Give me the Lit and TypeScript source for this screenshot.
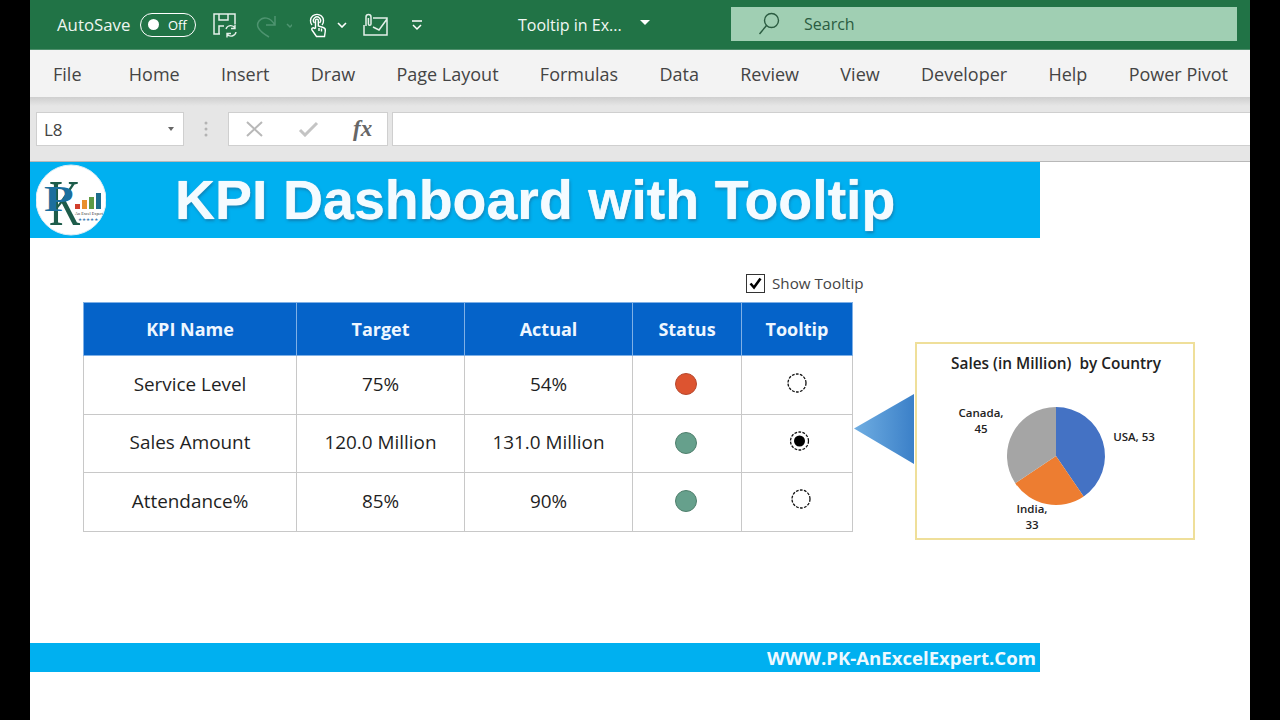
import { LitElement, html, css, svg } from 'lit';
import { customElement } from 'lit/decorators.js';

const TABS = ['File', 'Home', 'Insert', 'Draw', 'Page Layout', 'Formulas', 'Data', 'Review', 'View', 'Developer', 'Help', 'Power Pivot'];

const ROWS = [
  { name: 'Service Level', target: '75%', actual: '54%', status: 'bad', radio: 'r1', on: false },
  { name: 'Sales Amount', target: '120.0 Million', actual: '131.0 Million', status: 'good', radio: 'r2', on: true },
  { name: 'Attendance%', target: '85%', actual: '90%', status: 'good', radio: 'r3', on: false },
];

@customElement('app-root')
export class AppRoot extends LitElement {
  static styles = css`
    :host {
      display: block;
      width: 1280px;
      height: 720px;
      background: #000;
      overflow: hidden;
      font-family: 'Open Sans', 'Noto Sans', sans-serif;
    }
    .window {
      width: 1220px;
      height: 720px;
      margin-left: 30px;
      background: #fff;
      display: flex;
      flex-direction: column;
      overflow: hidden;
    }

    /* title bar */
    .titlebar {
      height: 50px;
      flex: none;
      background: #217346;
      color: #fff;
      display: flex;
      align-items: center;
      padding-left: 27px;
      box-sizing: border-box;
      border-bottom: 1px solid #4f8f6c;
    }
    .autosave { font-size: 16.8px; width: 83px; color: #eef6f1; white-space: nowrap; flex: none; }
    .toggle {
      width: 56px;
      height: 24px;
      box-sizing: border-box;
      border: 1.5px solid #fff;
      border-radius: 12px;
      display: flex;
      align-items: center;
      padding-left: 7px;
      font-size: 13px;
      gap: 9px;
      flex: none;
    }
    .toggle i { width: 11px; height: 11px; border-radius: 50%; background: #fff; }
    .titlebar svg { flex: none; display: block; }
    .save { margin-left: 17px; }
    .undo { margin-left: 19px; }
    .touch { margin-left: 16px; }
    .chev { margin-left: 9px; }
    .mail { margin-left: 16px; }
    .more { margin-left: 22px; }
    .docname { margin-left: 95px; width: 122px; font-size: 16px; color: #f2f8f4; flex: none; white-space: nowrap; }
    .tri { width: 0; height: 0; border-left: 5px solid transparent; border-right: 5px solid transparent; border-top: 5px solid #fff; margin-top: -4px; flex: none; }
    .search {
      margin-left: 81px;
      width: 506px;
      height: 34px;
      flex: none;
      background: #a0cfb3;
      display: flex;
      align-items: center;
      box-sizing: border-box;
      padding-left: 27px;
      color: #2b5c41;
      font-size: 16px;
      gap: 24px;
      margin-top: -1px;
    }

    /* ribbon tabs */
    .tabs {
      height: 47px;
      flex: none;
      background: #f3f3f3;
      display: flex;
      align-items: center;
      padding-left: 23px;
      gap: 41.3px;
      font-size: 18px;
      color: #444;
      white-space: nowrap;
      padding-top: 1px;
      box-sizing: border-box;
    }
    .tabs span:first-child { margin-right: 6px; }

    /* formula bar */
    .formula {
      height: 65px;
      flex: none;
      box-sizing: border-box;
      background: linear-gradient(#cfcfcf, #e6e6e6 9px);
      border-bottom: 1px solid #b8b8b8;
      display: flex;
      align-items: flex-start;
      padding: 15px 0 0 6px;
    }
    .box {
      height: 34px;
      box-sizing: border-box;
      background: #fff;
      border: 1px solid #cfcfcf;
      display: flex;
      align-items: center;
      flex: none;
    }
    .namebox { width: 148px; padding: 0 9px 0 7px; font-size: 17px; color: #444; justify-content: space-between; }
    .namebox .small { border-left: 3.5px solid transparent; border-right: 3.5px solid transparent; border-top: 4px solid #666; }
    .dots { width: 44px; flex: none; display: flex; justify-content: center; padding-top: 9px; }
    .fx-box { width: 160px; padding-left: 16px; gap: 33px; }
    .fx { font-family: 'Liberation Serif', serif; font-style: italic; font-size: 23px; color: #666; font-weight: 700; }
    .input { flex: 1; margin-left: 4px; border-right: 0; }

    /* sheet */
    .banner {
      width: 1010px;
      height: 76px;
      flex: none;
      background: #00b0f0;
      display: flex;
      align-items: center;
      padding-left: 6px;
      box-sizing: border-box;
    }
    .banner h1 {
      margin: 0 0 1px 69px;
      font-family: 'Liberation Sans', Arial, sans-serif;
      font-size: 55.5px;
      font-weight: 700;
      color: #f4fbff;
      text-shadow: 0 0 1px #fff, 1px 2px 3px rgba(30, 80, 120, 0.5);
      white-space: nowrap;
    }
    .content {
      display: flex;
      align-items: flex-start;
      padding: 35px 0 0 53px;
      height: 267px;
      flex: none;
    }
    .left { width: 771px; flex: none; }
    .show {
      display: flex;
      align-items: center;
      gap: 7px;
      height: 20px;
      margin: 0 0 9px 663px;
      width: 130px;
      font-size: 15.2px;
      color: #444;
      white-space: nowrap;
    }
    .check {
      width: 19px;
      height: 19px;
      box-sizing: border-box;
      border: 1px solid #333;
      flex: none;
      display: flex;
      align-items: center;
      justify-content: center;
    }
    table {
      border-collapse: collapse;
      table-layout: fixed;
      width: 769px;
      font-size: 18.9px;
      color: #1f1f1f;
      text-align: center;
    }
    th {
      background: #0563c9;
      color: #eef6ff;
      font-size: 18px;
      font-weight: 700;
      height: 53px;
      padding: 0;
      border: 1px solid #7fb0e6;
      box-sizing: border-box;
    }
    td {
      height: 58.5px;
      padding: 0 0 2px;
      border: 1px solid #c8c8c8;
      box-sizing: border-box;
    }
    .dot {
      display: block;
      width: 22px;
      height: 22px;
      margin: 1px auto 0;
      box-sizing: border-box;
      border-radius: 50%;
      border: 1px solid #4f7f6c;
      transform: translateX(-1px);
    }
    .dot.good { background: #66a08c; }
    .dot.bad { background: #dd5430; border-color: #b7492f; }
    .radio { display: block; margin: 0 auto; }
    .r1 { margin-bottom: 1px; }
    .r2 { margin-bottom: 2px; transform: translateX(2.5px); }
    .r3 { margin-bottom: 4px; transform: translateX(4px); }
    .arrow { flex: none; margin-top: 121px; display: block; }
    .card {
      flex: none;
      width: 280px;
      height: 198px;
      box-sizing: border-box;
      margin: 69px 0 0 1px;
      border: 2px solid #efdf9a;
      background: #fff;
    }
    .card svg { display: block; }
    .card text { font-family: 'Open Sans', 'Noto Sans', sans-serif; fill: #222; font-weight: 600; white-space: pre; }

    .footer {
      width: 1010px;
      height: 29px;
      flex: none;
      margin-top: 103px;
      background: #00b0f0;
      color: #eef9ff;
      font-weight: 700;
      font-size: 18.6px;
      display: flex;
      align-items: center;
      justify-content: flex-end;
      padding-right: 4px;
      box-sizing: border-box;
      white-space: nowrap;
    }
  `;

  private slice(a0: number, a1: number, color: string) {
    const cx = 139, cy = 112, r = 49;
    const p = (a: number) => {
      const t = (a * Math.PI) / 180;
      return `${(cx + r * Math.sin(t)).toFixed(2)} ${(cy - r * Math.cos(t)).toFixed(2)}`;
    };
    const large = a1 - a0 > 180 ? 1 : 0;
    return svg`<path d="M${cx} ${cy}L${p(a0)}A${r} ${r} 0 ${large} 1 ${p(a1)}Z" fill=${color} />`;
  }

  private logo() {
    return html`<svg width="70" height="72" viewBox="0 0 70 72">
      <circle cx="35" cy="36" r="35" fill="#fff" stroke="#dfeef5" stroke-width="1" />
      <text font-family="Liberation Serif" font-size="66" fill="#1d5c4a" transform="translate(13 61) scale(0.66 1)">K</text>
      <text font-family="Liberation Serif" font-weight="700" font-size="36" fill="#1b6f9e" transform="translate(8 47) scale(1.35 1)">P</text>
      <rect x="39" y="40" width="5" height="5" fill="#d23f2c" />
      <rect x="46" y="36" width="5" height="9" fill="#e8902c" />
      <rect x="53" y="33" width="5" height="12" fill="#5d9a45" />
      <rect x="60" y="29" width="5" height="16" fill="#1d6d8c" />
      <text x="39" y="50.500" font-family="Liberation Serif" font-size="4.200" fill="#333">An Excel Expert</text>
      <text x="42" y="57" font-family="DejaVu Sans" font-size="4.500" fill="#3f7fb5">★★★★★</text>
    </svg>`;
  }

  private radio(r: { radio: string; on: boolean }) {
    return html`<svg class="radio ${r.radio}" width="20" height="20" viewBox="0 0 20 20">
      <circle cx="10" cy="10" r="9" fill="#fff" stroke="#111" stroke-width="1.300" stroke-dasharray="2.800 1.300" />
      ${r.on ? svg`<circle cx="10" cy="10" r="5.500" fill="#000" />` : ''}
    </svg>`;
  }

  render() {
    return html`
      <div class="window">
        <div class="titlebar">
          <span class="autosave">AutoSave</span>
          <span class="toggle"><i></i>Off</span>
          <svg class="save" width="24" height="26" viewBox="0 0 24 26" fill="none" stroke="#e4f0e9" stroke-width="1.500">
            <path d="M7 22H1V2h21v10M6 2v6h9V2M6 22v-8h5" />
            <path d="M13 17a5 5 0 0 1 9-1M23 20a5 5 0 0 1-9 2M22 12.500V16.500H18M14 25.500V21.500H18" stroke-width="1.400" />
          </svg>
          <svg class="undo" width="36" height="26" viewBox="0 0 36 26" fill="none" stroke="#4e9470" stroke-width="1.500">
            <path d="M19 4V13H10M19 13C14 5 7 4 3 9 0 13 1 18 13 25" />
            <path d="M31 12l3 3 3-3" />
          </svg>
          <svg class="touch" width="20" height="26" viewBox="0 0 20 26" fill="none" stroke="#fff" stroke-width="1.400">
            <path d="M4 13a6.500 6.500 0 1 1 10 0M6.500 11a3.500 3.500 0 1 1 5 0" />
            <path d="M7.500 16V8.500a1.400 1.400 0 0 1 2.800 0V14l5 1.500c1.500.5 2.300 1.500 2 3.500l-.8 5.500H8.500L4 18c-1-1.500 1-3 2.500-1.500Z" fill="#217346" />
            <path d="M11 16v3M13.500 16.500v3" />
          </svg>
          <svg class="chev" width="10" height="6" viewBox="0 0 10 6" fill="none" stroke="#fff" stroke-width="1.600"><path d="M1 1l4 4 4-4" /></svg>
          <svg class="mail" width="26" height="24" viewBox="0 0 26 24" fill="none" stroke="#e4f0e9" stroke-width="1.500">
            <path d="M10 5H24V22H1V12M10 14l6 3 8-11" />
            <path d="M3 13V4a2.500 2.500 0 0 1 5 0v7a1.300 1.300 0 0 1-2.600 0V5" />
          </svg>
          <svg class="more" width="12" height="12" viewBox="0 0 12 12" fill="none" stroke="#fff" stroke-width="1.500">
            <path d="M1 2h10M2 6l4 4 4-4" />
          </svg>
          <span class="docname">Tooltip in Ex...</span>
          <span class="tri"></span>
          <div class="search">
            <svg width="22" height="24" viewBox="0 0 22 24" fill="none" stroke="#2b5c41" stroke-width="1.400">
              <circle cx="13.500" cy="8.500" r="7" />
              <path d="M8.500 13.500L1.500 22" />
            </svg>
            Search
          </div>
        </div>

        <div class="tabs">${TABS.map((t) => html`<span>${t}</span>`)}</div>

        <div class="formula">
          <div class="box namebox">L8<span class="small"></span></div>
          <div class="dots">
            <svg width="4" height="16" viewBox="0 0 4 16" fill="#b3b3b3"><circle cx="2" cy="2" r="1.500" /><circle cx="2" cy="8" r="1.500" /><circle cx="2" cy="14" r="1.500" /></svg>
          </div>
          <div class="box fx-box">
            <svg width="20" height="16" viewBox="0 0 20 16" fill="none" stroke="#b8b8b8" stroke-width="2"><path d="M2 1l15 14M17 1L2 15" /></svg>
            <svg width="22" height="16" viewBox="0 0 22 16" fill="none" stroke="#c4c4c4" stroke-width="3"><path d="M2 9l5 5L19 2" /></svg>
            <span class="fx">fx</span>
          </div>
          <div class="box input"></div>
        </div>

        <div class="banner">
          ${this.logo()}
          <h1>KPI Dashboard with Tooltip</h1>
        </div>

        <div class="content">
          <div class="left">
            <div class="show">
              <span class="check">
                <svg width="13" height="13" viewBox="0 0 13 13" fill="none" stroke="#000" stroke-width="2.600"><path d="M1.500 6.500l3.500 4 6.500-9" /></svg>
              </span>
              Show Tooltip
            </div>
            <table>
              <colgroup>
                <col style="width:213px" /><col style="width:168px" /><col style="width:168px" /><col style="width:109px" /><col style="width:111px" />
              </colgroup>
              <thead>
                <tr><th>KPI Name</th><th>Target</th><th>Actual</th><th>Status</th><th>Tooltip</th></tr>
              </thead>
              <tbody>
                ${ROWS.map(
                  (r) => html`<tr>
                    <td>${r.name}</td>
                    <td>${r.target}</td>
                    <td>${r.actual}</td>
                    <td><span class="dot ${r.status}"></span></td>
                    <td>${this.radio(r)}</td>
                  </tr>`,
                )}
              </tbody>
            </table>
          </div>
          <svg class="arrow" width="60" height="70" viewBox="0 0 60 70">
            <defs>
              <linearGradient id="arrowFill" x1="0" x2="1" y1="0" y2="0">
                <stop offset="0" stop-color="#70aee2" />
                <stop offset="1" stop-color="#3b80c8" />
              </linearGradient>
            </defs>
            <path d="M0 34.500L60 0V70Z" fill="url(#arrowFill)" />
          </svg>
          <div class="card">
            <svg width="276" height="194" viewBox="0 0 276 194">
              <text x="139" y="25" text-anchor="middle" font-size="15.400">Sales (in Million)  by Country</text>
              ${this.slice(0, 145.6, '#4472c4')}
              ${this.slice(145.6, 236.3, '#ed7d31')}
              ${this.slice(236.3, 360, '#a5a5a5')}
              <text x="64" y="73" text-anchor="middle" font-size="11.500">Canada,</text>
              <text x="64" y="89" text-anchor="middle" font-size="11.500">45</text>
              <text x="217" y="97" text-anchor="middle" font-size="11.500">USA, 53</text>
              <text x="115" y="169" text-anchor="middle" font-size="11.500">India,</text>
              <text x="115" y="185" text-anchor="middle" font-size="11.500">33</text>
            </svg>
          </div>
        </div>

        <div class="footer">WWW.PK-AnExcelExpert.Com</div>
      </div>
    `;
  }
}
